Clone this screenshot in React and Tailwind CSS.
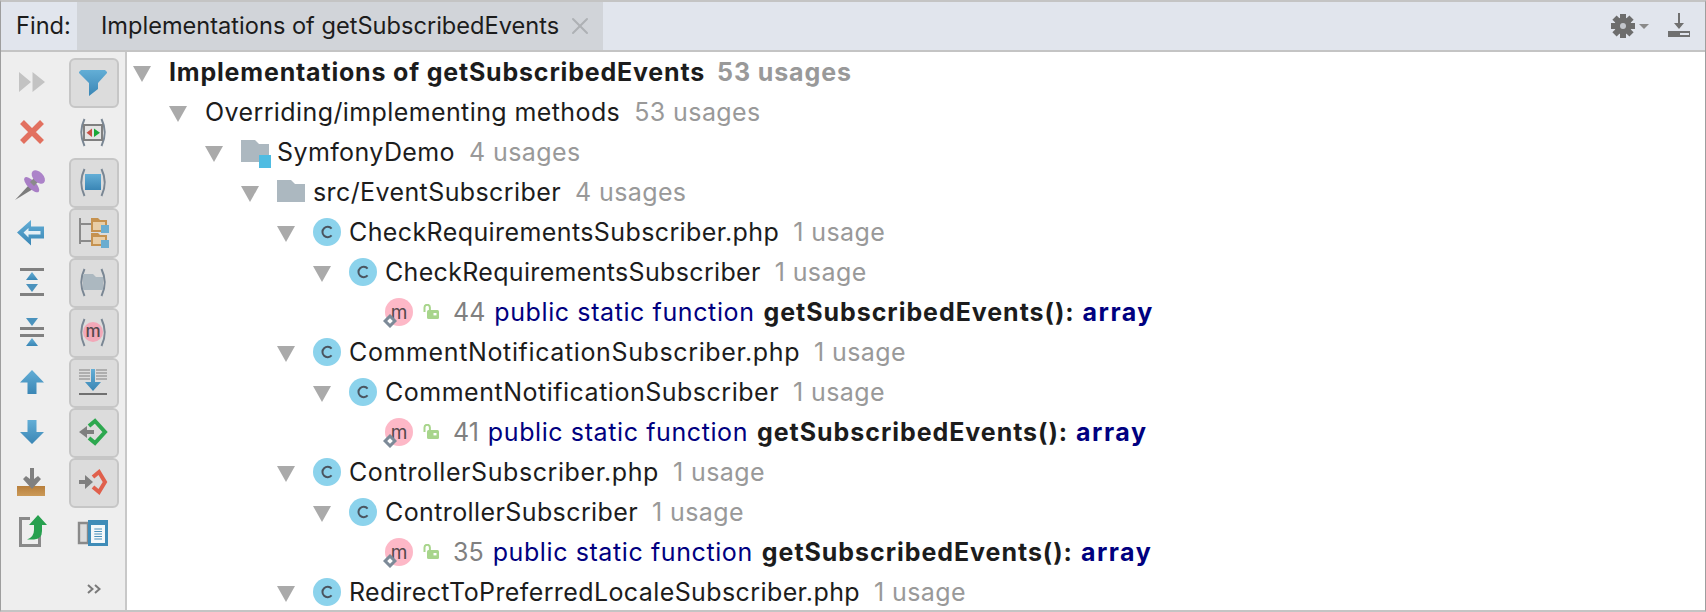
import React from 'react';
import { X } from 'lucide-react';

// Shared gradient defs for the toolbar icons
const Defs = () => (
  <svg width="0" height="0" className="absolute">
    <defs>
      <linearGradient id="blue" x1="0" y1="0" x2="0" y2="1">
        <stop offset="0" stopColor="#63aed6" />
        <stop offset="1" stopColor="#3a86b5" />
      </linearGradient>
      <linearGradient id="orange" x1="0" y1="0" x2="0" y2="1">
        <stop offset="0" stopColor="#b87f3c" />
        <stop offset="1" stopColor="#cb9a58" />
      </linearGradient>
    </defs>
  </svg>
);

const Icon = ({ children }) => (
  <svg width="32" height="32" viewBox="0 0 32 32" className="overflow-visible">{children}</svg>
);

const Arrow = () => (
  <span className="w-[36px] shrink-0 flex mt-[2px]">
    <svg width="18" height="16" viewBox="0 0 18 16">
      <path d="M0 0H18L9 16Z" fill="#aaaaaa" />
    </svg>
  </span>
);

const ClassIcon = () => (
  <span className="w-[36px] shrink-0 flex -mt-[2px]">
    <span className="w-7 h-7 rounded-full bg-[#8cd3ec] flex items-center justify-center">
      <svg width="14" height="14" viewBox="0 0 14 14">
        <path d="M11.6 3.6A5.2 5.2 0 1 0 11.6 10.4" fill="none" stroke="#4a5560" strokeWidth="2" />
      </svg>
    </span>
  </span>
);

const FolderIcon = ({ module }) => (
  <span className="w-[36px] shrink-0 flex">
    <svg width="32" height="30" viewBox="0 0 32 30">
      <path d="M0 2H14L18 6H28V24H0Z" fill="#acb8c0" />
      {module && <rect x="18" y="17" width="12" height="13" fill="#4fbce2" />}
    </svg>
  </span>
);

const MethodIcon = () => (
  <span className="relative w-7 h-7 rounded-full bg-[#fdb8c7] flex items-center justify-center shrink-0 -mt-[2px]">
    <span className="text-[#54484c] text-[19px] tracking-normal leading-none mt-[1px]">m</span>
    <svg width="14" height="14" viewBox="0 0 14 14" className="absolute -left-[2px] -bottom-[2px]">
      <rect x="2" y="2" width="10" height="10" transform="rotate(45 7 7)" fill="#7d8a98" />
      <rect x="5" y="5" width="4" height="4" transform="rotate(45 7 7)" fill="#fff" />
    </svg>
  </span>
);

const Lock = () => (
  <svg width="16" height="16" viewBox="0 0 16 16" className="shrink-0 ml-[10px] -mt-[2px]">
    <path d="M1.5 8V3.5a2.7 2.7 0 0 1 5.4 0V6" fill="none" stroke="#a8d58c" strokeWidth="2" />
    <rect x="4" y="6" width="12" height="9" rx="1.5" fill="#a8d58c" />
    <rect x="10.5" y="9" width="3" height="2.4" fill="#fff" />
  </svg>
);

const Row = ({ indent, icon, children }) => (
  <div className={`flex items-center h-[40px] whitespace-nowrap ${indent}`}>
    <Arrow />
    {icon}
    {children}
  </div>
);

const Usage = ({ children }) => <span className="ml-[14px] text-[#999999]">{children}</span>;

const MethodRow = ({ line }) => (
  <div className="flex items-center h-[40px] whitespace-nowrap pl-[258px]">
    <MethodIcon />
    <Lock />
    <span className="ml-[14px] text-[#808080] tracking-normal">{line}</span>
    <span className="ml-[9px] text-[#000080] tracking-[0.6px]">public static function</span>
    <span className="ml-[9px] font-bold text-[#1c1c1c] tracking-[0.95px]">getSubscribedEvents():</span>
    <span className="ml-[8px] font-bold text-[#000080] tracking-[1.5px]">array</span>
  </div>
);

const Press = ({ children }) => (
  <div className="w-[50px] h-[50px] rounded-[6px] bg-[#dcdcdc] border-2 border-[#c6c6c6] flex items-center justify-center">
    {children}
  </div>
);

const Plain = ({ children }) => (
  <div className="w-[50px] h-[50px] flex items-center justify-center">{children}</div>
);

const Paren = ({ children }) => (
  <Icon>
    <path d="M6.5 2Q0 15.5 6.5 29M23.5 2Q30 15.5 23.5 29" fill="none" stroke="#7a8794" strokeWidth="2" />
    {children}
  </Icon>
);

const leftIcons = [
  <Icon key="a"><path d="M3 6L15 16L3 26ZM16.500 6L29 16L16.500 26Z" fill="#c3c3c3" /></Icon>,
  <Icon key="b"><path d="M6 6L26 26M26 6L6 26" stroke="#e2705f" strokeWidth="5.500" /></Icon>,
  <Icon key="c">
    <path d="M-1 34L13 19L17 23Z" fill="#7c7c7c" />
    <ellipse cx="15.700" cy="18.700" rx="10" ry="4" transform="rotate(45 15.700 18.700)" fill="#a97fc6" />
    <path d="M14 16L19 11L23 15L18 20Z" fill="#8a8a8a" />
    <ellipse cx="22.300" cy="11" rx="8" ry="5" transform="rotate(45 22.300 11)" fill="#ac83c9" />
  </Icon>,
  <Icon key="d">
    <path d="M1 16.500L15 4V10.500H28V22.500H15V29.500Z" fill="url(#blue)" />
    <path d="M7.500 16.500L12.500 12V15H24.500V18.500H12.500V21.500Z" fill="#e6f0f6" />
  </Icon>,
  <Icon key="e">
    <rect x="4" y="2" width="24" height="3" fill="#808080" />
    <rect x="4" y="27" width="24" height="3" fill="#808080" />
    <path d="M16 6L22 14H10Z" fill="url(#blue)" />
    <path d="M10 18H22L16 26Z" fill="#4a92bd" />
  </Icon>,
  <Icon key="f">
    <path d="M10 2H22L16 10Z" fill="#4a92bd" />
    <rect x="4" y="11" width="24" height="3" fill="#808080" />
    <rect x="4" y="18" width="24" height="3" fill="#808080" />
    <path d="M16 22L22 30H10Z" fill="url(#blue)" />
  </Icon>,
  <Icon key="g"><path d="M16 4L28 16.500H20.500V28H11.500V16.500H4Z" fill="url(#blue)" /></Icon>,
  <Icon key="h"><path d="M11.500 4H20.500V16H28L16 28L4 16H11.500Z" fill="url(#blue)" /></Icon>,
  <Icon key="i">
    <path d="M1 20H29V30H1Z" fill="url(#orange)" />
    <path d="M14 2H18V13L22 10L25 13L16 23L7 13L10 10L14 13Z" fill="#808080" />
  </Icon>,
  <Icon key="j">
    <path d="M14 2.500H4.500V29.500H23.500V20" fill="none" stroke="#8a8a8a" strokeWidth="3" />
    <path d="M22 -1L31 9H26V15Q26 23 18 23.500H11Q18 21 18 14V9H13Z" fill="#27a04f" />
  </Icon>,
];

const rightIcons = [
  <Press key="a">
    <Icon><path d="M3 3H27L29 5V6L20 16V22L11 29V16L1 6V5Z" fill="url(#blue)" /></Icon>
  </Press>,
  <Plain key="b">
    <Paren>
      <rect x="6" y="8" width="18" height="15" fill="#e4e4e4" stroke="#808080" strokeWidth="2" />
      <path d="M14 11.500V20L8.500 15.700Z" fill="#c94f45" />
      <path d="M16 11.500V20L22 15.700Z" fill="#1aa838" />
    </Paren>
  </Plain>,
  <Press key="c"><Paren><rect x="7" y="7" width="16" height="16" fill="url(#blue)" /></Paren></Press>,
  <Press key="d">
    <Icon>
      <path d="M2 1V27M2 7H13M2 24H13" fill="none" stroke="#8a8a8a" strokeWidth="2" />
      <path d="M13 1H20L22 3H29V15H13Z" fill="#c6924f" />
      <rect x="15" y="5" width="12" height="8" fill="#e8cda6" />
      <path d="M13 16H20L22 18H29V29H13Z" fill="#c6924f" />
      <rect x="15" y="20" width="12" height="7" fill="#e8cda6" />
      <rect x="23" y="8" width="8" height="8" fill="#6badd0" />
      <rect x="23" y="23" width="8" height="8" fill="#6badd0" />
    </Icon>
  </Press>,
  <Press key="e"><Paren><path d="M5 7H15L18 10H25V23H5Z" fill="#acb8c0" /></Paren></Press>,
  <Press key="f">
    <Paren>
      <circle cx="15" cy="15" r="10" fill="#f2a8b8" />
      <text x="15" y="20" textAnchor="middle" fontSize="17" fill="#54484c" fontFamily="Inter, sans-serif" fontWeight="500">m</text>
    </Paren>
  </Press>,
  <Press key="g">
    <Icon>
      <path d="M1 3H12M1 6H12M1 9H12M1 12H12M18 3H29M18 6H29M18 9H29M18 12H29" stroke="#808080" strokeWidth="1.200" />
      <path d="M13 2H17V15H23L15 24L7 15H13Z" fill="url(#blue)" />
      <rect x="1" y="26" width="28" height="2" fill="#707070" />
    </Icon>
  </Press>,
  <Press key="h">
    <Icon>
      <path d="M11 9L17 4L27 15L17 26L11 21" fill="none" stroke="#2da84f" strokeWidth="4" />
      <path d="M1 15L9 9V13H16V17H9V21Z" fill="#7f7f7f" />
    </Icon>
  </Press>,
  <Press key="i">
    <Icon>
      <path d="M15 10L21 5L27 15L21 25L15 20" fill="none" stroke="#e0604c" strokeWidth="4" />
      <path d="M1 13H7V8L15 15L7 22V17H1Z" fill="#7f7f7f" />
    </Icon>
  </Press>,
  <Plain key="j">
    <Icon>
      <path d="M1 6H10V26H1Z" fill="#dcdcdc" stroke="#8a8a8a" strokeWidth="2.400" />
      <rect x="10" y="3" width="20" height="26" fill="#3f8cb8" />
      <rect x="13" y="8" width="14" height="18" fill="#f4f8fa" />
      <path d="M16.300 12H24M16.300 14.500H24M16.300 17H24M16.300 19.500H24M16.300 22H24" stroke="#4a90ba" strokeWidth="1.200" />
    </Icon>
  </Plain>,
];

const Gear = () => (
  <svg width="24" height="24" viewBox="0 0 24 24">
    {[0, 45, 90, 135].map((a) => (
      <rect key={a} x="9" y="0" width="6" height="24" transform={`rotate(${a} 12 12)`} fill="#6d6d6d" />
    ))}
    <circle cx="12" cy="12" r="8.500" fill="#6d6d6d" />
    <circle cx="12" cy="12" r="3" fill="#c3c6cc" />
  </svg>
);

export default function App() {
  return (
    <div className="w-[1706px] h-[612px] overflow-hidden flex flex-col bg-white border-x border-x-[#9e9e9e] border-y-2 border-y-[#c4c4c4] font-['Inter',sans-serif] text-[#1c1c1c]">
      <Defs />
      {/* Header with tab */}
      <div className="h-[50px] shrink-0 flex items-stretch bg-[#e1e5ed] border-b-2 border-[#c4c4c4] text-[23.600px]">
        <div className="w-[76px] pl-[15px] flex items-center">Find:</div>
        <div className="w-[526px] bg-[#d1d4d9] pl-[24px] flex items-center whitespace-nowrap">
          Implementations of getSubscribedEvents
          <X size={28} strokeWidth={1.700} className="ml-[7px] text-[#aeb1b5]" />
        </div>
        <div className="flex-1 flex items-center justify-end pr-[15px] gap-[19px]">
          <div className="flex items-center gap-[4px]">
            <Gear />
            <svg width="10" height="5" viewBox="0 0 10 5"><path d="M0 0H10L5 5Z" fill="#8a8a8a" /></svg>
          </div>
          <svg width="22" height="26" viewBox="0 0 22 26">
            <path d="M6 0H8V10H12L7 16L2 10H6Z" transform="translate(4 0)" fill="#707070" />
            <rect x="0" y="18" width="22" height="6" fill="#707070" />
            <rect x="12" y="20" width="9" height="2" fill="#e1e5ed" />
          </svg>
        </div>
      </div>

      <div className="flex-1 flex min-h-0">
        {/* Left toolbars */}
        <div className="w-[126px] shrink-0 bg-[#eeeeee] border-r-2 border-[#c8c8c8] relative flex">
          <div className="w-[68px] pl-[15px] pt-[5px] flex flex-col">
            {leftIcons.map((ic, i) => (
              <div key={i} className="w-[32px] h-[50px] flex items-center justify-center">{ic}</div>
            ))}
          </div>
          <div className="pt-[6px] flex flex-col">{rightIcons}</div>
          <svg width="14" height="10" viewBox="0 0 14 10" className="absolute left-[86px] bottom-[16px]">
            <path d="M1 1L5.500 5L1 9M8 1L12.500 5L8 9" fill="none" stroke="#7a7a7a" strokeWidth="2" />
          </svg>
        </div>

        {/* Usage tree */}
        <div className="flex-1 pt-[1px] overflow-hidden text-[25px] tracking-[0.4px]">
          <Row indent="pl-[6px]">
            <span className="font-bold tracking-[0.81px]">Implementations of getSubscribedEvents</span>
            <span className="ml-[12px] font-bold tracking-[0.9px] text-[#999999]">53 usages</span>
          </Row>
          <Row indent="pl-[42px]">
            <span>Overriding/implementing methods</span>
            <Usage>53 usages</Usage>
          </Row>
          <Row indent="pl-[78px]" icon={<FolderIcon module />}>
            <span>SymfonyDemo</span>
            <Usage>4 usages</Usage>
          </Row>
          <Row indent="pl-[114px]" icon={<FolderIcon />}>
            <span>src/EventSubscriber</span>
            <Usage>4 usages</Usage>
          </Row>
          <Row indent="pl-[150px]" icon={<ClassIcon />}>
            <span>CheckRequirementsSubscriber.php</span>
            <Usage>1 usage</Usage>
          </Row>
          <Row indent="pl-[186px]" icon={<ClassIcon />}>
            <span className="tracking-[0.33px]">CheckRequirementsSubscriber</span>
            <Usage>1 usage</Usage>
          </Row>
          <MethodRow line="44" />
          <Row indent="pl-[150px]" icon={<ClassIcon />}>
            <span className="tracking-[0.63px]">CommentNotificationSubscriber.php</span>
            <Usage>1 usage</Usage>
          </Row>
          <Row indent="pl-[186px]" icon={<ClassIcon />}>
            <span className="tracking-[0.51px]">CommentNotificationSubscriber</span>
            <Usage>1 usage</Usage>
          </Row>
          <MethodRow line="41" />
          <Row indent="pl-[150px]" icon={<ClassIcon />}>
            <span className="tracking-[0.58px]">ControllerSubscriber.php</span>
            <Usage>1 usage</Usage>
          </Row>
          <Row indent="pl-[186px]" icon={<ClassIcon />}>
            <span>ControllerSubscriber</span>
            <Usage>1 usage</Usage>
          </Row>
          <MethodRow line="35" />
          <Row indent="pl-[150px]" icon={<ClassIcon />}>
            <span>RedirectToPreferredLocaleSubscriber.php</span>
            <Usage>1 usage</Usage>
          </Row>
        </div>
      </div>
    </div>
  );
}
